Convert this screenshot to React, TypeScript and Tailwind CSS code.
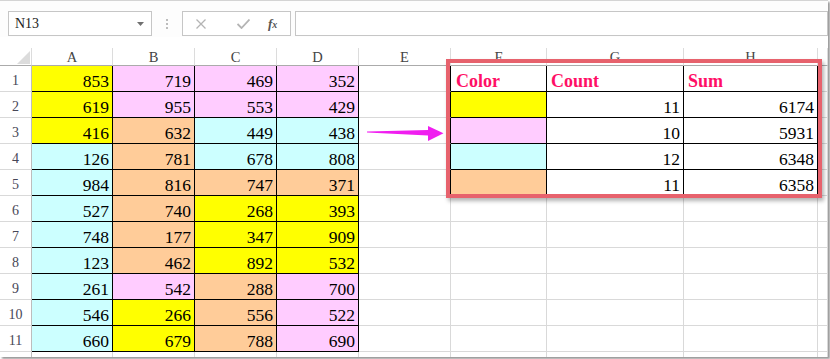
import React from "react";

type C = "Y" | "P" | "C" | "O";
const bg: Record<C, string> = {
  Y: "bg-[#ffff00]",
  P: "bg-[#ffccff]",
  C: "bg-[#ccffff]",
  O: "bg-[#ffcc99]",
};

const data: [number, C][][] = [
  [[853, "Y"], [719, "P"], [469, "P"], [352, "P"]],
  [[619, "Y"], [955, "P"], [553, "P"], [429, "P"]],
  [[416, "Y"], [632, "O"], [449, "C"], [438, "C"]],
  [[126, "C"], [781, "O"], [678, "C"], [808, "C"]],
  [[984, "C"], [816, "O"], [747, "O"], [371, "O"]],
  [[527, "C"], [740, "O"], [268, "Y"], [393, "Y"]],
  [[748, "C"], [177, "O"], [347, "Y"], [909, "Y"]],
  [[123, "C"], [462, "O"], [892, "Y"], [532, "Y"]],
  [[261, "C"], [542, "P"], [288, "O"], [700, "P"]],
  [[546, "C"], [266, "Y"], [556, "O"], [522, "P"]],
  [[660, "C"], [679, "Y"], [788, "O"], [690, "P"]],
];

const summary: [C, number, number][] = [
  ["Y", 11, 6174],
  ["P", 10, 5931],
  ["C", 12, 6348],
  ["O", 11, 6358],
];

const cols = ["A", "B", "C", "D", "E", "F", "G", "H", ""];

function Empty() {
  return <div className="border-r border-b border-[#d9d9d9]" />;
}

function Num({ v, cls }: { v: number | string; cls: string }) {
  return (
    <div className={`flex items-end justify-end pr-[3px] border-r border-b border-black ${cls}`}>
      <span className="text-[17.5px] leading-[20px] text-black">{v}</span>
    </div>
  );
}

function RowHead({ n }: { n: number | null }) {
  return (
    <div className="flex items-end justify-center pb-[3px] border-r border-b border-r-[#bdbdbd] border-b-[#d9d9d9] text-[14px] leading-[14px] text-[#474757]">
      {n}
    </div>
  );
}

export default function App() {
  const rows = [];
  for (let r = 0; r < 12; r++) {
    const cells: React.ReactNode[] = [];
    cells.push(<RowHead key="h" n={r < 11 ? r + 1 : null} />);
    if (r < 11) {
      data[r].forEach(([v, c], i) => cells.push(<Num key={"d" + i} v={v} cls={bg[c]} />));
    } else {
      for (let i = 0; i < 4; i++) cells.push(<Empty key={"d" + i} />);
    }
    if (r < 5) {
      cells.push(<div key="e" className="border-r border-b border-r-black border-b-[#d9d9d9]" />);
    } else {
      cells.push(<Empty key="e" />);
    }
    if (r === 0) {
      cells.push(
        <div key="f" className="flex items-end pl-[5px] border-r border-b border-black">
          <span className="text-[18px] leading-[20px] font-bold text-[#ff0f66]">Color</span>
        </div>
      );
      cells.push(
        <div key="g" className="flex items-end pl-[4px] border-r border-b border-black">
          <span className="text-[18px] leading-[20px] font-bold text-[#ff0f66]">Count</span>
        </div>
      );
      cells.push(
        <div key="hh" className="flex items-end pl-[4px] border-r border-b border-black">
          <span className="text-[18px] leading-[20px] font-bold text-[#ff0f66]">Sum</span>
        </div>
      );
    } else if (r < 5) {
      const [c, n, s] = summary[r - 1];
      cells.push(<div key="f" className={`border-r border-b border-black ${bg[c]}`} />);
      cells.push(<Num key="g" v={n} cls="bg-white" />);
      cells.push(<Num key="hh" v={s} cls="bg-white" />);
    } else {
      cells.push(<Empty key="f" />);
      cells.push(<Empty key="g" />);
      cells.push(<Empty key="hh" />);
    }
    cells.push(<Empty key="i" />);
    rows.push(
      <div key={r} className="grid grid-cols-[32px_81px_82px_82px_82px_92px_96px_137px_134px_10px] h-[26px] shrink-0">
        {cells}
      </div>
    );
  }

  return (
    <div className="w-[830px] h-[359px] bg-white overflow-hidden font-['Liberation_Serif',serif]">
      <div className="w-[828px] h-[357px] shadow-[2px_2px_2px_rgba(0,0,0,0.4)] relative bg-white">
        <div className="h-full overflow-hidden flex flex-col border-t border-[#d4d4d4]">
          {/* toolbar */}
          <div className="flex items-start pt-[10px] h-[36px] shrink-0 bg-[#fdfdfd]">
            <div className="ml-[8px] w-[144px] h-[25px] border border-[#c6c6c6] bg-white flex items-center justify-between pl-[6px] pr-[7px]">
              <span className="text-[14px] text-[#222]">N13</span>
              <svg width="7" height="4" viewBox="0 0 7 4">
                <polygon points="0,0 7,0 3.5,4" fill="#707070" />
              </svg>
            </div>
            <div className="w-[30px] h-[25px] flex flex-col items-center justify-center gap-[2px]">
              <div className="w-[2px] h-[2px] bg-[#bdbdbd]" />
              <div className="w-[2px] h-[2px] bg-[#bdbdbd]" />
              <div className="w-[2px] h-[2px] bg-[#bdbdbd]" />
            </div>
            <div className="w-[109px] h-[25px] border border-[#c6c6c6] bg-white flex items-center">
              <svg className="ml-[13px]" width="10" height="10" viewBox="0 0 10 10">
                <path d="M0.5 0.5 L9.5 9.5 M9.5 0.5 L0.5 9.5" stroke="#b4b4b4" strokeWidth="1.3" />
              </svg>
              <svg className="ml-[31px]" width="13" height="10" viewBox="0 0 13 10">
                <path d="M0.5 5 L4.5 9 L12.5 0.5" stroke="#b4b4b4" strokeWidth="1.8" fill="none" />
              </svg>
              <span className="ml-[18px] text-[13px] italic font-bold text-[#555] leading-none">
                f<span className="text-[10px]">x</span>
              </span>
            </div>
            <div className="ml-[4px] flex-1 h-[25px] border border-[#c6c6c6] bg-white" />
          </div>
          {/* column headers */}
          <div className="mt-[11px] grid grid-cols-[32px_81px_82px_82px_82px_92px_96px_137px_134px_10px] h-[18px] shrink-0">
            <div className="relative border-r border-b border-r-[#dcdcdc] border-b-[#ababab]">
              <svg className="absolute left-[17px] top-[3px]" width="13" height="13" viewBox="0 0 13 13">
                <polygon points="13,0 13,13 0,13" fill="#dcdcdc" />
              </svg>
            </div>
            {cols.map((c, i) => (
              <div
                key={i}
                className="flex justify-center pt-[2px] border-r border-b border-r-[#dcdcdc] border-b-[#ababab] text-[14.5px] leading-[15px] text-[#444]"
              >
                {c}
              </div>
            ))}
          </div>
          {rows}
        </div>
        {/* red highlight box */}
        <div className="absolute left-[446px] top-[59px] w-[376px] h-[139px] border-[4px] border-[#e7626d] shadow-[2px_3px_4px_rgba(0,0,0,0.3)]" />
        {/* arrow */}
        <svg className="absolute left-[366px] top-[124px]" width="80" height="20" viewBox="0 0 80 20">
          <polygon points="1,7.6 62,6 62,2 77.5,9.3 62,17 62,11.5 1,8.4" fill="#f01ef0" />
        </svg>
      </div>
    </div>
  );
}
